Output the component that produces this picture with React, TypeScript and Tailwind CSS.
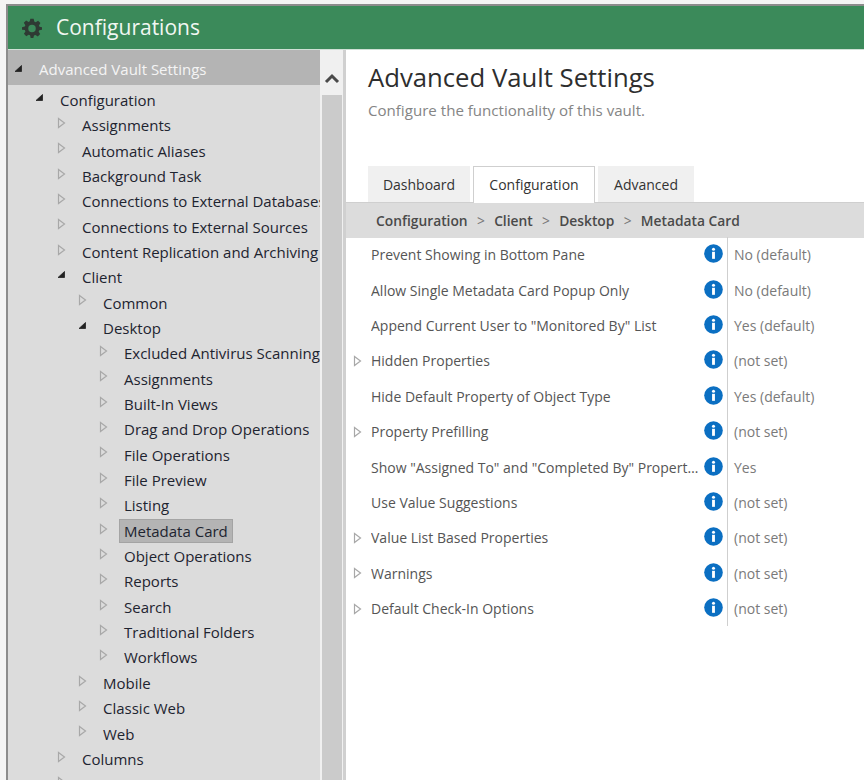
import React from "react";

const tree: [string, number, "open" | "closed"][] = [
  ["Configuration", 1, "open"],
  ["Assignments", 2, "closed"],
  ["Automatic Aliases", 2, "closed"],
  ["Background Task", 2, "closed"],
  ["Connections to External Databases", 2, "closed"],
  ["Connections to External Sources", 2, "closed"],
  ["Content Replication and Archiving", 2, "closed"],
  ["Client", 2, "open"],
  ["Common", 3, "closed"],
  ["Desktop", 3, "open"],
  ["Excluded Antivirus Scanning", 4, "closed"],
  ["Assignments", 4, "closed"],
  ["Built-In Views", 4, "closed"],
  ["Drag and Drop Operations", 4, "closed"],
  ["File Operations", 4, "closed"],
  ["File Preview", 4, "closed"],
  ["Listing", 4, "closed"],
  ["Metadata Card", 4, "closed"],
  ["Object Operations", 4, "closed"],
  ["Reports", 4, "closed"],
  ["Search", 4, "closed"],
  ["Traditional Folders", 4, "closed"],
  ["Workflows", 4, "closed"],
  ["Mobile", 3, "closed"],
  ["Classic Web", 3, "closed"],
  ["Web", 3, "closed"],
  ["Columns", 2, "closed"],
  ["Forms", 2, "closed"],
];

const props: [string, string, boolean][] = [
  ["Prevent Showing in Bottom Pane", "No (default)", false],
  ["Allow Single Metadata Card Popup Only", "No (default)", false],
  ['Append Current User to "Monitored By" List', "Yes (default)", false],
  ["Hidden Properties", "(not set)", true],
  ["Hide Default Property of Object Type", "Yes (default)", false],
  ["Property Prefilling", "(not set)", true],
  ['Show "Assigned To" and "Completed By" Properties', "Yes", false],
  ["Use Value Suggestions", "(not set)", false],
  ["Value List Based Properties", "(not set)", true],
  ["Warnings", "(not set)", true],
  ["Default Check-In Options", "(not set)", true],
];

function Closed() {
  return (
    <svg width="9" height="12" viewBox="0 0 9 12" className="shrink-0">
      <path d="M1.5 1.5 L7.5 6 L1.5 10.5 Z" fill="none" stroke="#a8a8a8" strokeWidth="1.2" />
    </svg>
  );
}

function Open() {
  return (
    <svg width="9" height="12" viewBox="0 0 9 12" className="shrink-0">
      <path d="M1 8.5 L7.5 2.5 L7.5 8.5 Z" fill="#222" stroke="#222" strokeWidth="0.8" />
    </svg>
  );
}

function Info() {
  return (
    <svg width="19" height="19" viewBox="0 0 20 20" className="shrink-0">
      <circle cx="10" cy="10" r="9.8" fill="#0b6fc2" />
      <circle cx="10" cy="5.6" r="1.6" fill="#fff" />
      <rect x="8.5" y="8.2" width="3" height="7.4" fill="#fff" />
    </svg>
  );
}

export default function App() {
  return (
    <div className="w-[864px] h-[780px] overflow-hidden bg-[#f4f4f4] font-['Open_Sans','Noto_Sans',sans-serif] pt-1 pl-[6px]">
      <div className="h-[776px] flex flex-col border-t-2 border-l-2 border-[#8c8c8c] bg-white">
        <div className="h-[44px] shrink-0 bg-[#3b8a5a] flex items-center pl-[14px] gap-[14px] border-b border-[#cfe0d5]">
          <svg width="20" height="20" viewBox="0 0 24 24">
            <path
              fillRule="evenodd"
              fill="#2e3a33"
              d="M10 1h4l.7 3.3 1.7.7 2.9-1.8 2.8 2.8-1.8 2.9.7 1.7L24 11v3l-3.3.7-.7 1.7 1.8 2.9-2.8 2.8-2.9-1.8-1.7.7L13.6 24h-3.2l-.7-3.3-1.7-.7-2.9 1.8-2.8-2.8 1.8-2.9-.7-1.7L0 14v-3l3.3-.7.7-1.7-1.8-2.9L5 2.9l2.9 1.8 1.4-.7zM12 8a4.5 4.5 0 1 0 0 9 4.5 4.5 0 0 0 0-9z"
            />
          </svg>
          <span className="text-[21px] leading-none text-[#f1f7f2]">Configurations</span>
        </div>
        <div className="flex-1 flex min-h-0">
          <div className="w-[312px] shrink-0 bg-[#dcdcdc] overflow-hidden">
            <div className="h-[35px] bg-[#b4b4b4] flex items-center pl-[6px] gap-[16px] pt-[3px]">
              <Open />
              <span className="text-[15px] text-[#f4f4f4] whitespace-nowrap">Advanced Vault Settings</span>
            </div>
            <div className="pt-[2.5px]">
              {tree.map(([label, level, state], i) => (
                <div
                  key={i}
                  className={`h-[25.35px] flex items-center whitespace-nowrap text-[15px] text-[#1e2430] ${
                    level === 1 ? "pl-[27px]" : level === 2 ? "pl-[49px]" : level === 3 ? "pl-[70px]" : "pl-[91px]"
                  }`}
                >
                  <span className="w-[25px] shrink-0 -mt-[5px]">{state === "open" ? <Open /> : <Closed />}</span>
                  {label === "Metadata Card" ? (
                    <span className="-ml-[5px] px-[4px] h-[24px] leading-[22px] bg-[#b4b4b4] border border-[#a4a4a4]">{label}</span>
                  ) : (
                    <span>{label}</span>
                  )}
                </div>
              ))}
            </div>
          </div>
          <div className="w-[23px] shrink-0 flex flex-col bg-[#f0f0f0] border-l border-[#f0f0f0]">
            <div className="h-[45px] flex items-center justify-center pt-[11px]">
              <svg width="16" height="11" viewBox="0 0 16 11">
                <path d="M2 9 L8 3 L14 9" fill="none" stroke="#4a4a4a" strokeWidth="3" />
              </svg>
            </div>
            <div className="flex-1 bg-[#cbcbcb] mx-px" />
          </div>
          <div className="w-[3px] shrink-0 bg-[#d0d0d0]" />
          <div className="flex-1 min-w-0 bg-white flex flex-col">
            <div className="pl-[22px] pt-[11px] h-[116px] shrink-0">
              <div className="text-[25.7px] leading-[34px] text-[#2e2e2e]">Advanced Vault Settings</div>
              <div className="text-[15.1px] leading-[20px] mt-[5px] text-[#858585]">Configure the functionality of this vault.</div>
            </div>
            <div className="flex pl-[22px] h-[36px] shrink-0 items-end gap-[3px] text-[14px] text-[#333]">
              <div className="w-[102px] h-[36px] bg-[#f0f0f0] flex items-center justify-center">Dashboard</div>
              <div className="w-[122px] h-[37px] -mb-px pb-[2px] bg-white border border-b-0 border-[#cfcfcf] flex items-center justify-center z-10">Configuration</div>
              <div className="w-[96px] h-[36px] bg-[#f0f0f0] flex items-center justify-center">Advanced</div>
            </div>
            <div className="h-[36px] shrink-0 bg-[#dcdcdc] border-t border-[#cfcfcf] flex items-center pl-[30px] pt-[2px] text-[13.8px] font-semibold text-[#4a4a4a]">
              <span>Configuration</span>
              <span className="mx-[9.3px] font-normal text-[#777]">&gt;</span>
              <span>Client</span>
              <span className="mx-[9.3px] font-normal text-[#777]">&gt;</span>
              <span>Desktop</span>
              <span className="mx-[9.3px] font-normal text-[#777]">&gt;</span>
              <span>Metadata Card</span>
            </div>
            <div className="w-[382px] shrink-0 -mt-px">
              {props.map(([name, value, expand], i) => (
                <div key={i} className="h-[35.4px] flex items-center">
                  <span className="w-[25px] pl-[7px] shrink-0">{expand ? <Closed /> : null}</span>
                  <span className="w-[332px] shrink-0 pr-[3px] truncate text-[14px] text-[#555]">{name}</span>
                  <span className="w-[24px] shrink-0 -mt-[2px] pl-px"><Info /></span>
                  <span className="h-full shrink-0 border-l border-[#cfcfcf] pl-[6px] flex items-center text-[14px] text-[#7a7a7a] whitespace-nowrap">{value}</span>
                </div>
              ))}
            </div>
          </div>
        </div>
      </div>
    </div>
  );
}
